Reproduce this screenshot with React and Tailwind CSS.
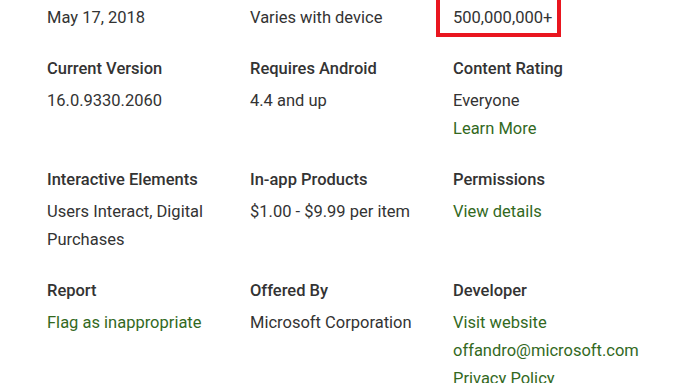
import React from "react";

const rows = [
  [
    { v: [{ t: "May 17, 2018" }] },
    { v: [{ t: "Varies with device" }] },
    { v: [{ t: "500,000,000+", boxed: true }] },
  ],
  [
    { h: "Current Version", v: [{ t: "16.0.9330.2060" }] },
    { h: "Requires Android", v: [{ t: "4.4 and up" }] },
    { h: "Content Rating", v: [{ t: "Everyone" }, { t: "Learn More", link: true }] },
  ],
  [
    { h: "Interactive Elements", v: [{ t: "Users Interact, Digital Purchases" }] },
    { h: "In-app Products", v: [{ t: "$1.00 - $9.99 per item" }] },
    { h: "Permissions", v: [{ t: "View details", link: true }] },
  ],
  [
    { h: "Report", v: [{ t: "Flag as inappropriate", link: true }] },
    { h: "Offered By", v: [{ t: "Microsoft Corporation" }] },
    {
      h: "Developer",
      v: [
        { t: "Visit website", link: true },
        { t: "offandro@microsoft.com", link: true },
        { t: "Privacy Policy", link: true },
      ],
    },
  ],
];

export default function App() {
  return (
    <div
      className="w-[680px] h-[383px] overflow-hidden bg-white"
      style={{ fontFamily: "Roboto, 'Noto Sans', Arial, sans-serif" }}
    >
      <div className="pt-[4px] pl-[47px] flex flex-col gap-[23px]">
        {rows.map((row, i) => (
          <div key={i} className="grid grid-cols-[203px_203px_203px]">
            {row.map((c, j) => (
              <div key={j} className="pr-4">
                {c.h && (
                  <div className="text-[16.5px] leading-[28px] font-medium text-[#333333] mb-[4px]">
                    {c.h}
                  </div>
                )}
                {c.v.map((v, k) => (
                  <div
                    key={k}
                    className={
                      "relative text-[16.5px] leading-[28px] " +
                      (v.link ? "text-[#33691e]" : "text-[#333333]")
                    }
                  >
                    {v.t}
                    {v.boxed && (
                      <span className="absolute left-[-17px] top-[-20px] bottom-[-5px] w-[125px] border-4 border-[#e9161f]" />
                    )}
                  </div>
                ))}
              </div>
            ))}
          </div>
        ))}
      </div>
    </div>
  );
}
